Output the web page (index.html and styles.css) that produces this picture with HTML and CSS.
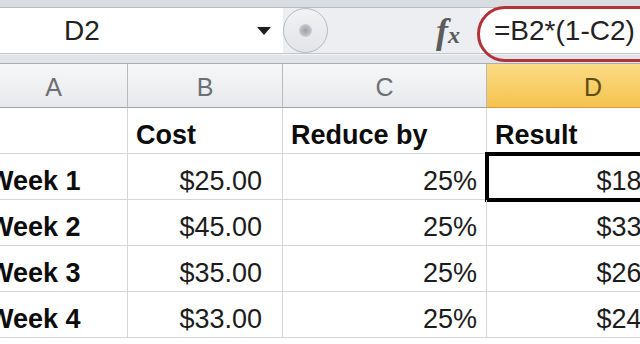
FILE: index.html
```html
<!DOCTYPE html>
<html lang="en">
<head>
    <meta charset="UTF-8">
    <title>Reduce by percentage</title>
    <link rel="stylesheet" href="styles.css">
</head>
<body>
    <div class="window">
        <div class="top-strip"></div>
        <div class="formula-row">
            <div class="name-box">
                <span class="ref">D2</span>
                <span class="arrow"></span>
            </div>
            <div class="round-btn"><span class="dot"></span></div>
            <div class="fx-area"><span class="fx">f<small>x</small></span></div>
            <div class="formula">=B2*(1-C2)</div>
        </div>
        <div class="highlight"></div>
        <div class="gap-band"></div>

        <div class="sheet">
            <div class="col-head">A</div>
            <div class="col-head">B</div>
            <div class="col-head">C</div>
            <div class="col-head active">D</div>

            <div class="cell"></div>
            <div class="cell bold">Cost</div>
            <div class="cell bold">Reduce by</div>
            <div class="cell bold">Result</div>

            <div class="cell bold">Week 1</div>
            <div class="cell num money">$25.00</div>
            <div class="cell num">25%</div>
            <div class="cell num money selected">$18.75</div>

            <div class="cell bold">Week 2</div>
            <div class="cell num money">$45.00</div>
            <div class="cell num">25%</div>
            <div class="cell num money">$33.75</div>

            <div class="cell bold">Week 3</div>
            <div class="cell num money">$35.00</div>
            <div class="cell num">25%</div>
            <div class="cell num money">$26.25</div>

            <div class="cell bold">Week 4</div>
            <div class="cell num money">$33.00</div>
            <div class="cell num">25%</div>
            <div class="cell num money">$24.75</div>
        </div>
    </div>
</body>
</html>
```
FILE: styles.css
```css
body {
    margin: 0;
    background: #fff;
    font-family: "Liberation Sans", Arial, sans-serif;
    color: #151515;
}
.window {
    position: relative;
    width: 640px;
    height: 344px;
    overflow: hidden;
}
.top-strip {
    height: 7px;
    background: #d9dde2;
    border-bottom: 1px solid #b9bdc2;
}
.formula-row {
    display: flex;
    height: 45px;
    background: #eceef1;
    border-bottom: 1px solid #c3c7cc;
}
.name-box {
    width: 283px;
    flex-shrink: 0;
    background: #fff;
    display: flex;
    align-items: center;
}
.ref {
    width: 164px;
    text-align: center;
    font-size: 28px;
    color: #222;
}
.arrow {
    margin-left: 93px;
    width: 0;
    height: 0;
    border-left: 7px solid transparent;
    border-right: 7px solid transparent;
    border-top: 8px solid #1e1e1e;
}
.round-btn {
    width: 45px;
    height: 45px;
    flex-shrink: 0;
    box-sizing: border-box;
    border-radius: 50%;
    border: 1px solid #b7bbbf;
    background: linear-gradient(#f1f2f4, #e2e4e7);
    display: flex;
    align-items: center;
    justify-content: center;
}
.dot {
    width: 13px;
    height: 13px;
    border-radius: 50%;
    background: radial-gradient(#9c9fa3, #c9cbce 70%, transparent);
}
.fx-area {
    flex: 1;
    display: flex;
    align-items: center;
    justify-content: flex-end;
    padding-right: 20px;
}
.fx {
    font-family: "Liberation Serif", serif;
    font-style: italic;
    font-weight: bold;
    font-size: 36px;
    color: #5b5b5b;
}
.fx small {
    font-size: 24px;
}
.formula {
    width: 160px;
    flex-shrink: 0;
    box-sizing: border-box;
    background: #fff;
    padding-left: 14px;
    font-size: 28px;
    line-height: 45px;
    color: #222;
    white-space: nowrap;
}
.highlight {
    position: absolute;
    left: 477px;
    top: 6px;
    width: 220px;
    height: 50px;
    border: 3px solid #b3323a;
    border-radius: 28px;
}
.gap-band {
    height: 8px;
    background: #e1e4e8;
    border-top: 1px solid #f4f5f7;
    border-bottom: 1px solid #a9aeb3;
}
.sheet {
    display: grid;
    grid-template-columns: 148px 155px 204px 213px;
    grid-template-rows: 44px repeat(5, 46px);
    margin-left: -20px;
}
.col-head {
    display: flex;
    align-items: center;
    justify-content: center;
    padding-top: 4px;
    font-size: 25px;
    color: #6c6f73;
    background: linear-gradient(#f6f7f8, #e7e9ec);
    border-right: 1px solid #b7bbc0;
    border-bottom: 1px solid #9da2a8;
}
.col-head.active {
    color: #5e4d10;
    background: linear-gradient(#fbdc85, #f5c24f);
    border-bottom-color: #d99a2b;
}
.cell {
    display: flex;
    align-items: flex-end;
    padding: 0 8px 3px;
    font-size: 27px;
    line-height: 30px;
    white-space: nowrap;
    border-right: 1px solid #d6d6d6;
    border-bottom: 1px solid #d6d6d6;
}
.bold {
    font-weight: bold;
    color: #0c0c0c;
}
.num {
    justify-content: flex-end;
    padding-right: 9px;
    color: #1c1c1c;
}
.money {
    padding-right: 20px;
}
.selected {
    outline: 4px solid #000;
    outline-offset: -2px;
}
```
